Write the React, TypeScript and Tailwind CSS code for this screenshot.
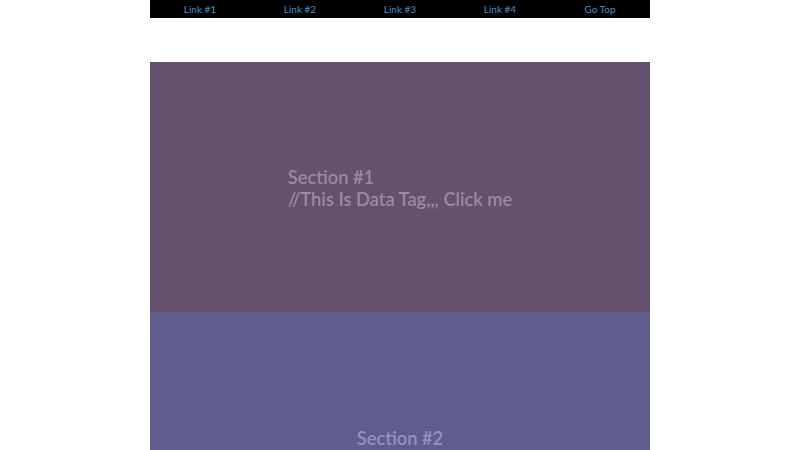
const links = ['Link #1', 'Link #2', 'Link #3', 'Link #4', 'Go Top'];

export default function App() {
  return (
    <div className="min-h-screen bg-white font-['Lato',sans-serif]">
      <div className="mx-auto w-[500px]">
        <nav className="flex h-[18px] bg-black">
          {links.map((l) => (
            <a
              key={l}
              href="#"
              className="flex flex-1 items-center justify-center text-[10px] text-[#4690c8]"
            >
              {l}
            </a>
          ))}
        </nav>
        <div className="h-[44px]" />
        <section className="flex h-[250px] items-center justify-center bg-[#65506d] pt-[2px]">
          <div className="text-[18.3px] font-semibold leading-[22px] text-white/35">
            <div>Section #1</div>
            <div>//This Is Data Tag,,, Click me</div>
          </div>
        </section>
        <section className="flex h-[250px] items-center justify-center bg-[#5e5d8e] pt-[2px]">
          <div className="text-[18.3px] font-semibold leading-[22px] text-white/35">Section #2</div>
        </section>
      </div>
    </div>
  );
}
